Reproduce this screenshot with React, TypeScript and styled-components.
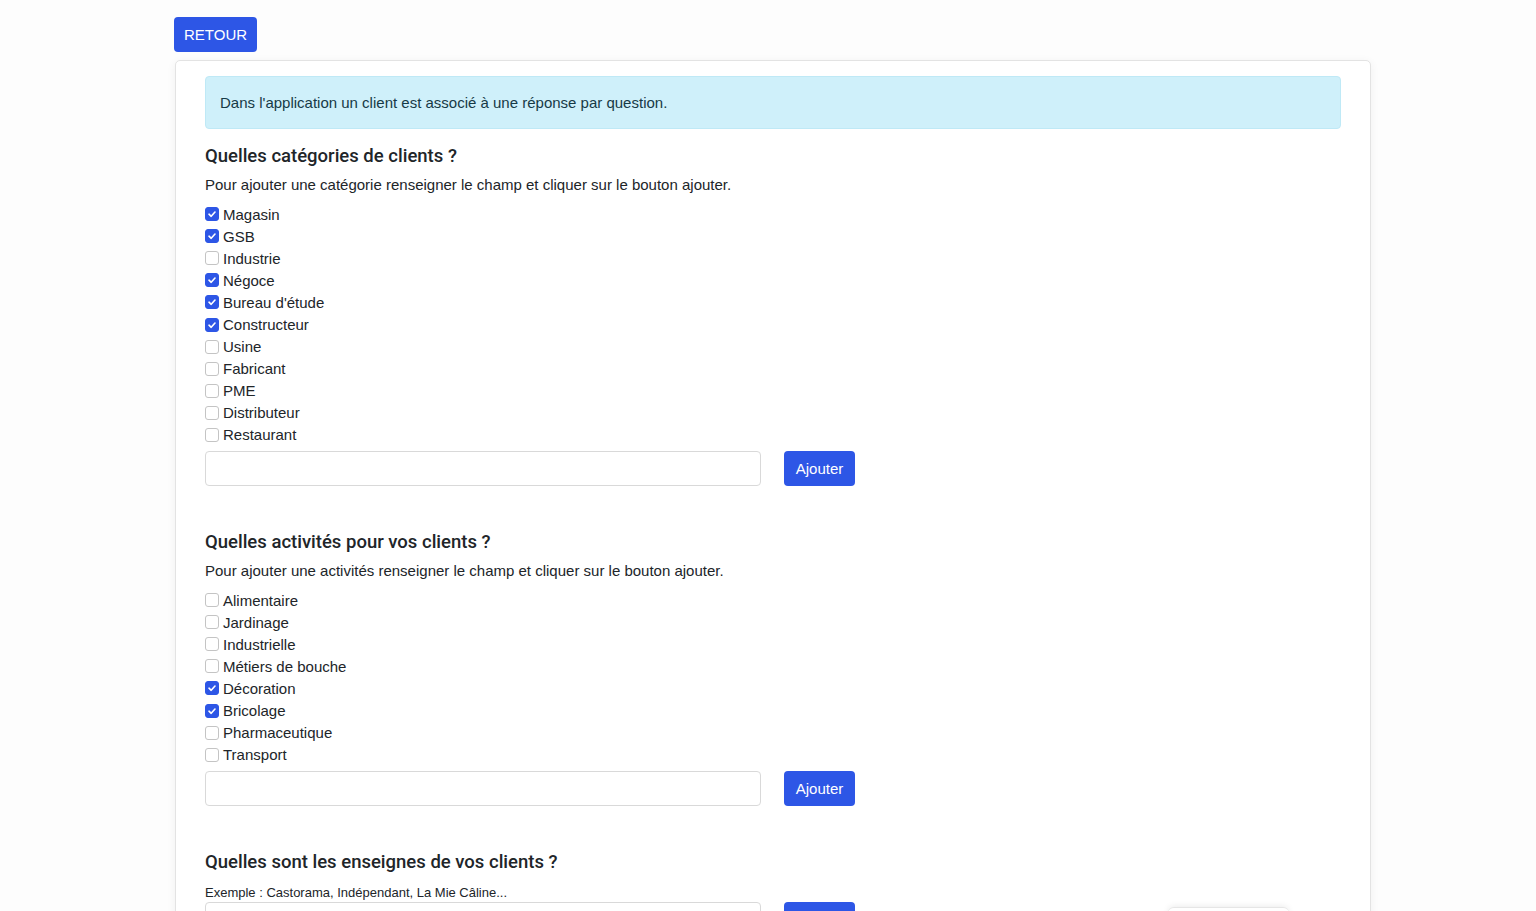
import React from "react";
import styled, { createGlobalStyle } from "styled-components";

const Global = createGlobalStyle`
  html, body { margin: 0; padding: 0; background: #fdfdfd; }
  body { font-family: "Liberation Sans", Arial, sans-serif; color: #212529; font-size: 15px; }
  * { box-sizing: border-box; }
`;

const Page = styled.div`
  position: relative;
  height: 911px;
  overflow: hidden;
  padding: 17px 0 0 174px;
`;

const BackButton = styled.button`
  display: block;
  height: 35px;
  padding: 0 10px;
  background: #2d56e6;
  color: #fff;
  border: none;
  border-radius: 4px;
  font-family: inherit;
  font-size: 15px;
  text-transform: uppercase;
  margin-bottom: 8px;
`;

const Card = styled.div`
  width: 1196px;
  margin-left: 1px;
  background: #fff;
  border: 1px solid #e3e3e3;
  border-radius: 5px;
  box-shadow: 0 2px 10px rgba(0, 0, 0, 0.06);
  padding: 15px 29px 40px;
`;

const Alert = styled.div`
  background: #cff0fa;
  border: 1px solid #bfe9f6;
  border-radius: 4px;
  height: 53px;
  display: flex;
  align-items: center;
  padding: 0 14px;
  color: #163a46;
  font-size: 15px;
  margin-bottom: 16px;
`;

const Section = styled.section`
  & + & { margin-top: 45px; }
`;

const Title = styled.h5`
  margin: 0;
  font-family: Roboto, "Liberation Sans", sans-serif;
  font-size: 18.5px;
  font-weight: 500;
  line-height: 22px;
  color: #212529;
`;

const Help = styled.p<{ $small?: boolean }>`
  margin: ${(p) => (p.$small ? "10px 0 0" : "7px 0 7px")};
  font-size: ${(p) => (p.$small ? "13px" : "15px")};
  line-height: ${(p) => (p.$small ? "19px" : "22px")};
`;

const List = styled.div`
  display: flex;
  flex-direction: column;
  margin-bottom: 5px;
`;

const Row = styled.label`
  display: flex;
  align-items: center;
  height: 22.1px;
  font-size: 15px;
`;

const Box = styled.span<{ $on: boolean }>`
  width: 14px;
  height: 14px;
  border-radius: 3px;
  margin-right: 4px;
  display: inline-flex;
  align-items: center;
  justify-content: center;
  background: ${(p) => (p.$on ? "#2d56e6" : "#fff")};
  border: 1px solid ${(p) => (p.$on ? "#2d56e6" : "#c4c4c4")};
`;

const FormRow = styled.div`
  display: flex;
  gap: 23px;
`;

const Input = styled.input`
  width: 556px;
  height: 35px;
  border: 1px solid #d9d9d9;
  border-radius: 4px;
  background: #fff;
`;

const AddButton = styled.button`
  height: 35px;
  width: 71px;
  background: #2d56e6;
  color: #fff;
  border: none;
  border-radius: 4px;
  font-family: inherit;
  font-size: 15px;
`;

const Floating = styled.div`
  position: absolute;
  left: 1168px;
  top: 907px;
  width: 121px;
  height: 40px;
  background: #fff;
  border-top: 1px solid #e6e6e6;
  border-radius: 6px;
  box-shadow: 0 -1px 6px rgba(0, 0, 0, 0.08);
`;

const Check = () => (
  <svg width="10" height="10" viewBox="0 0 10 10">
    <path d="M2 5.2 L4.2 7.3 L8 3" fill="none" stroke="#fff" strokeWidth="1.6" strokeLinecap="round" strokeLinejoin="round" />
  </svg>
);

type Item = [string, boolean];

const categories: Item[] = [
  ["Magasin", true],
  ["GSB", true],
  ["Industrie", false],
  ["Négoce", true],
  ["Bureau d'étude", true],
  ["Constructeur", true],
  ["Usine", false],
  ["Fabricant", false],
  ["PME", false],
  ["Distributeur", false],
  ["Restaurant", false],
];

const activities: Item[] = [
  ["Alimentaire", false],
  ["Jardinage", false],
  ["Industrielle", false],
  ["Métiers de bouche", false],
  ["Décoration", true],
  ["Bricolage", true],
  ["Pharmaceutique", false],
  ["Transport", false],
];

const CheckList = ({ items }: { items: Item[] }) => (
  <List>
    {items.map(([label, on]) => (
      <Row key={label}>
        <Box $on={on}>{on && <Check />}</Box>
        {label}
      </Row>
    ))}
  </List>
);

export default function App() {
  return (
    <>
      <Global />
      <Page>
        <BackButton>Retour</BackButton>
        <Card>
          <Alert>Dans l'application un client est associé à une réponse par question.</Alert>
          <Section>
            <Title>Quelles catégories de clients ?</Title>
            <Help>Pour ajouter une catégorie renseigner le champ et cliquer sur le bouton ajouter.</Help>
            <CheckList items={categories} />
            <FormRow>
              <Input />
              <AddButton>Ajouter</AddButton>
            </FormRow>
          </Section>
          <Section>
            <Title>Quelles activités pour vos clients ?</Title>
            <Help>Pour ajouter une activités renseigner le champ et cliquer sur le bouton ajouter.</Help>
            <CheckList items={activities} />
            <FormRow>
              <Input />
              <AddButton>Ajouter</AddButton>
            </FormRow>
          </Section>
          <Section>
            <Title>Quelles sont les enseignes de vos clients ?</Title>
            <Help $small>Exemple : Castorama, Indépendant, La Mie Câline...</Help>
            <FormRow>
              <Input />
              <AddButton>Ajouter</AddButton>
            </FormRow>
          </Section>
        </Card>
        <Floating />
      </Page>
    </>
  );
}
